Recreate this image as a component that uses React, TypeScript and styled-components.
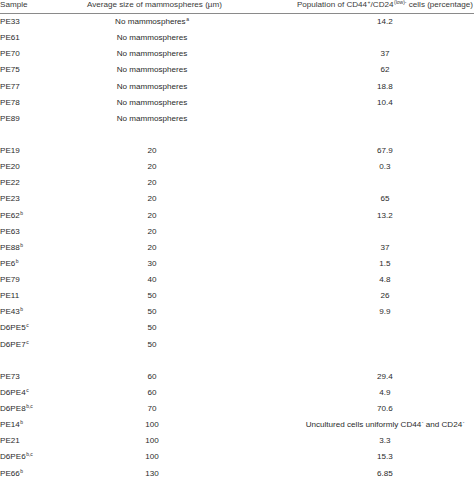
import styled, { createGlobalStyle } from "styled-components";

interface RowData {
  sample: string;
  sampleSup?: string;
  size?: string;
  sizeSup?: string;
  population?: React.ReactNode;
}

const GlobalStyle = createGlobalStyle`
  html, body {
    margin: 0;
    padding: 0;
    background: #ffffff;
    overflow: hidden;
  }
  body {
    font-family: "Liberation Sans", Arial, sans-serif;
    color: #2b2b2b;
  }
`;

const Frame = styled.div`
  width: 474px;
  height: 479px;
  overflow: hidden;
`;

const Table = styled.div`
  display: grid;
  grid-template-columns: 87px 130px 336px;
  width: 553px;
  font-size: 8.1px;
`;

const Row = styled.div`
  display: contents;
`;

const HeadCell = styled.div<{ align: "left" | "center" }>`
  height: 13px;
  line-height: 10px;
  text-align: ${(p) => p.align};
  white-space: nowrap;
  border-bottom: 1px solid #8a8a8a;
  color: #3a3a3a;
`;

const Cell = styled.div<{ align: "left" | "center" }>`
  height: 16.14px;
  line-height: 16.14px;
  text-align: ${(p) => p.align};
  white-space: nowrap;
`;

const Sup = styled.sup`
  font-size: 5px;
  vertical-align: 3px;
  line-height: 0;
  margin-left: 0.5px;
`;

const rows: (RowData | null)[] = [
  { sample: "PE33", size: "No mammospheres", sizeSup: "a", population: "14.2" },
  { sample: "PE61", size: "No mammospheres" },
  { sample: "PE70", size: "No mammospheres", population: "37" },
  { sample: "PE75", size: "No mammospheres", population: "62" },
  { sample: "PE77", size: "No mammospheres", population: "18.8" },
  { sample: "PE78", size: "No mammospheres", population: "10.4" },
  { sample: "PE89", size: "No mammospheres" },
  null,
  { sample: "PE19", size: "20", population: "67.9" },
  { sample: "PE20", size: "20", population: "0.3" },
  { sample: "PE22", size: "20" },
  { sample: "PE23", size: "20", population: "65" },
  { sample: "PE62", sampleSup: "b", size: "20", population: "13.2" },
  { sample: "PE63", size: "20" },
  { sample: "PE88", sampleSup: "b", size: "20", population: "37" },
  { sample: "PE6", sampleSup: "b", size: "30", population: "1.5" },
  { sample: "PE79", size: "40", population: "4.8" },
  { sample: "PE11", size: "50", population: "26" },
  { sample: "PE43", sampleSup: "b", size: "50", population: "9.9" },
  { sample: "D6PE5", sampleSup: "c", size: "50" },
  { sample: "D6PE7", sampleSup: "c", size: "50" },
  null,
  { sample: "PE73", size: "60", population: "29.4" },
  { sample: "D6PE4", sampleSup: "c", size: "60", population: "4.9" },
  { sample: "D6PE8", sampleSup: "b,c", size: "70", population: "70.6" },
  {
    sample: "PE14",
    sampleSup: "b",
    size: "100",
    population: (
      <>
        Uncultured cells uniformly CD44<Sup>-</Sup> and CD24<Sup>-</Sup>
      </>
    ),
  },
  { sample: "PE21", size: "100", population: "3.3" },
  { sample: "D6PE6", sampleSup: "b,c", size: "100", population: "15.3" },
  { sample: "PE66", sampleSup: "b", size: "130", population: "6.85" },
];

const App = () => {
  return (
    <Frame>
      <GlobalStyle />
      <Table>
        <Row>
          <HeadCell align="left">Sample</HeadCell>
          <HeadCell align="center">Average size of mammospheres (µm)</HeadCell>
          <HeadCell align="center">
            Population of CD44<Sup>+</Sup>/CD24<Sup>(low)-</Sup> cells (percentage)
          </HeadCell>
        </Row>
        {rows.map((row, i) =>
          row ? (
            <Row key={i}>
              <Cell align="left">
                {row.sample}
                {row.sampleSup && <Sup>{row.sampleSup}</Sup>}
              </Cell>
              <Cell align="center">
                {row.size}
                {row.sizeSup && <Sup>{row.sizeSup}</Sup>}
              </Cell>
              <Cell align="center">{row.population}</Cell>
            </Row>
          ) : (
            <Row key={i}>
              <Cell align="left" />
              <Cell align="center" />
              <Cell align="center" />
            </Row>
          )
        )}
      </Table>
    </Frame>
  );
};

export default App;
